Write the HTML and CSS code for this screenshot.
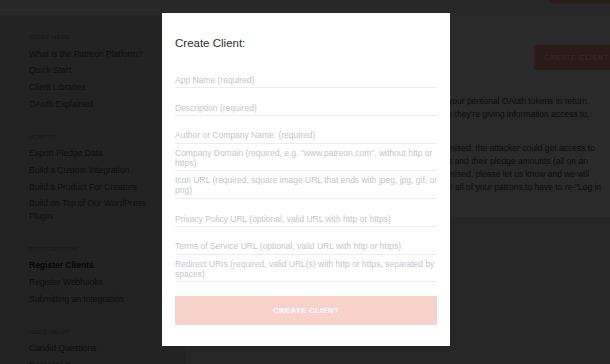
FILE: index.html
```html
<!DOCTYPE html>
<html lang="en">
<head>
    <meta charset="UTF-8">
    <meta name="viewport" content="width=device-width, initial-scale=1.0">
    <title>Register Clients | Patreon Platform</title>
    <link rel="stylesheet" href="styles.css">
</head>
<body>

    <div class="page">
        <header class="topbar">
            <span class="topbar-btn"></span>
        </header>

        <div class="layout">
            <aside class="sidebar">
                <div class="nav-group">
                    <h4>Start Here</h4>
                    <ul>
                        <li>What is the Patreon Platform?</li>
                        <li>Quick Start</li>
                        <li>Client Libraries</li>
                        <li>OAuth Explained</li>
                    </ul>
                </div>
                <div class="nav-group">
                    <h4>How To</h4>
                    <ul>
                        <li>Export Pledge Data</li>
                        <li>Build a Custom Integration</li>
                        <li>Build a Product For Creators</li>
                        <li>Build on Top of Our WordPress Plugin</li>
                    </ul>
                </div>
                <div class="nav-group">
                    <h4>Registration</h4>
                    <ul>
                        <li class="active">Register Clients</li>
                        <li>Register Webhooks</li>
                        <li>Submitting an Integration</li>
                    </ul>
                </div>
                <div class="nav-group">
                    <h4>Need Help?</h4>
                    <ul>
                        <li>Candid Questions</li>
                        <li>Contact Us</li>
                    </ul>
                </div>
            </aside>

            <main class="content">
                <div class="content-top">
                    <div class="actions">
                        <button class="btn-dark">Create Client</button>
                    </div>
                    <div class="doc">
<p>your personal OAuth tokens in return.
s they're giving information access to,</p>
<p>mised, the attacker could get access to
s and their pledge amounts (all on an
mised, please let us know and we will
e all of your patrons to have to re-"Log in</p>
                    </div>
                </div>
            </main>
        </div>
    </div>

    <div class="backdrop">
        <div class="modal">
            <h2>Create Client:</h2>
            <form class="client-form">
                <input class="field" type="text" placeholder="App Name (required)">
                <input class="field" type="text" placeholder="Description (required)">
                <input class="field" type="text" placeholder="Author or Company Name: (required)">
                <textarea class="field" placeholder="Company Domain (required, e.g. &quot;www.patreon.com&quot;, without http or&#10;https)"></textarea>
                <textarea class="field" placeholder="Icon URL (required, square image URL that ends with jpeg, jpg, gif, or&#10;png)"></textarea>
                <input class="field" type="text" placeholder="Privacy Policy URL (optional, valid URL with http or https)">
                <input class="field" type="text" placeholder="Terms of Service URL (optional, valid URL with http or https)">
                <textarea class="field" placeholder="Redirect URIs (required, valid URL(s) with http or https, separated by&#10;spaces)"></textarea>
                <button class="submit" type="button">Create Client</button>
            </form>
        </div>
    </div>

</body>
</html>
```

FILE: styles.css
```css
body {
    font-family: "Liberation Sans", Arial, sans-serif;
    background: #262626;
    margin: 0;
    padding: 0;
    height: 364px;
    overflow: hidden;
}
.page {
    height: 364px;
    overflow: hidden;
}
.topbar {
    height: 15px;
    background: #282828;
    display: flex;
    justify-content: flex-end;
}
.topbar-btn {
    width: 60px;
    height: 3px;
    background: #2a1b19;
}
.layout {
    display: flex;
}
.sidebar {
    width: 185px;
    height: 349px;
    box-sizing: border-box;
    padding: 15px 0 0 29px;
    background: #232323;
}
.nav-group {
    margin-bottom: 17px;
}
.nav-group h4 {
    margin: 0;
    font-size: 6px;
    font-weight: normal;
    letter-spacing: 0.35px;
    line-height: 15.7px;
    text-transform: uppercase;
    color: #151515;
}
.nav-group ul {
    list-style: none;
    margin: 0;
    padding: 0;
    width: 130px;
}
.nav-group li {
    font-size: 8.5px;
    line-height: 12.7px;
    padding: 2px 0;
    color: #0c0c0c;
}
.nav-group li.active {
    font-weight: bold;
    color: #050505;
}
.content {
    flex: 1;
}
.content-top {
    height: 202px;
    box-sizing: border-box;
    padding-top: 30px;
    background: #2a2a2a;
}
.actions {
    display: flex;
    justify-content: flex-end;
    margin-right: -9px;
}
.btn-dark {
    height: 25px;
    padding: 0 10px;
    border: none;
    background: #2a1b19;
    color: #3a2c2a;
    font-family: inherit;
    font-size: 7px;
    letter-spacing: 0.8px;
    text-transform: uppercase;
}
.doc {
    width: 162px;
    margin: 24.5px 0 0 auto;
    font-size: 8.5px;
    line-height: 13px;
    color: #0c0c0c;
}
.doc p {
    margin: 0 0 21px;
    white-space: pre;
}

/* modal */
.backdrop {
    position: fixed;
    top: 0;
    left: 0;
    right: 0;
    bottom: 0;
    display: flex;
    justify-content: center;
    align-items: flex-start;
    padding: 13px 0 0 2px;
}
.modal {
    width: 288px;
    box-sizing: border-box;
    padding: 23.3px 13px 21px;
    background: white;
}
.modal h2 {
    margin: 0 0 10.2px;
    font-size: 11.5px;
    line-height: 14px;
    font-weight: normal;
    color: #2e2e2e;
}
.client-form {
    display: flex;
    flex-direction: column;
}
.field {
    display: block;
    width: 100%;
    height: 27.75px;
    box-sizing: border-box;
    margin: 0;
    padding: 14px 0 2px;
    border: none;
    border-bottom: 1px solid #ebebf0;
    background: transparent;
    font-family: inherit;
    font-size: 8.5px;
    color: #333;
    outline: none;
}
textarea.field {
    padding: 4px 0 0;
    line-height: 10px;
    resize: none;
    overflow: hidden;
    white-space: pre;
}
.field::placeholder {
    color: #c4c4cc;
}
.submit {
    margin-top: 13.5px;
    height: 29px;
    border: none;
    background: #f8d1cb;
    color: white;
    font-family: inherit;
    font-size: 8px;
    font-weight: bold;
    letter-spacing: 0.2px;
    text-transform: uppercase;
}
```
